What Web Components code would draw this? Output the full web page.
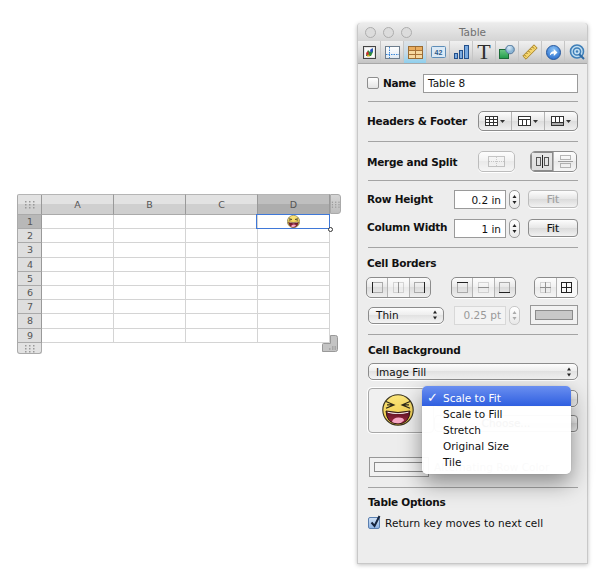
<!DOCTYPE html>
<html>
<head>
<meta charset="utf-8">
<title>Table</title>
<style>
  html, body { margin: 0; padding: 0; background: #fff; }
  body {
    display: flex;
    align-items: flex-start;
    width: 611px;
    height: 573px;
    overflow: hidden;
    font-family: "DejaVu Sans", sans-serif;
    font-size: 10.5px;
    color: #111;
  }
</style>
</head>
<body>
  <x-sheet></x-sheet>
  <x-inspector title="Table">
    <x-toolbar slot="toolbar"></x-toolbar>

    <x-row top="10" h="18">
      <x-check></x-check>
      <x-label style="margin-left:4px">Name</x-label>
      <x-field value="Table 8" align="left" style="margin-left:auto;width:155px"></x-field>
    </x-row>
    <x-rule top="9"></x-rule>

    <x-row top="9" h="20">
      <x-label>Headers &amp; Footer</x-label>
      <x-seg style="margin-left:auto;width:100px">
        <x-icon name="hdr1"></x-icon><x-icon name="hdr2"></x-icon><x-icon name="hdr3"></x-icon>
      </x-seg>
    </x-row>
    <x-rule top="10"></x-rule>

    <x-row top="9" h="21">
      <x-label>Merge and Split</x-label>
      <x-seg off style="margin-left:auto;width:37px"><x-icon name="merge" off></x-icon></x-seg>
      <x-seg style="margin-left:15px;margin-right:1px;width:47px">
        <x-icon name="splitv" class="on" style="flex:24 1 0"></x-icon><x-icon name="splith" off style="flex:23 1 0"></x-icon>
      </x-seg>
    </x-row>
    <x-rule top="8"></x-rule>

    <x-row top="9" h="19">
      <x-label style="margin-bottom:2px">Row Height</x-label>
      <x-field value="0.2 in" style="margin-left:auto;width:52px"></x-field>
      <x-stepper style="margin-left:3px"></x-stepper>
      <x-button off style="margin-left:8px;width:50px;align-self:flex-start">Fit</x-button>
    </x-row>
    <x-row top="10" h="19">
      <x-label style="margin-bottom:3px">Column Width</x-label>
      <x-field value="1 in" style="margin-left:auto;width:52px"></x-field>
      <x-stepper style="margin-left:3px"></x-stepper>
      <x-button style="margin-left:8px;width:50px;align-self:flex-start">Fit</x-button>
    </x-row>
    <x-rule top="9"></x-rule>

    <x-row top="8" h="14"><x-label>Cell Borders</x-label></x-row>
    <x-row top="7" h="21">
      <x-seg style="margin-left:-1px;width:65px">
        <x-icon name="bleft"></x-icon><x-icon name="bmidv" off></x-icon><x-icon name="bright"></x-icon>
      </x-seg>
      <x-seg style="margin-left:20px;width:65px">
        <x-icon name="btop"></x-icon><x-icon name="bmidh" off></x-icon><x-icon name="bbot"></x-icon>
      </x-seg>
      <x-seg style="margin-left:auto;width:44px">
        <x-icon name="binner" off></x-icon><x-icon name="bouter" class="white"></x-icon>
      </x-seg>
    </x-row>
    <x-row top="7" h="20">
      <x-select style="margin-left:1px;width:76px;height:17px">Thin</x-select>
      <x-field off value="0.25 pt" style="margin-left:10px;width:52px"></x-field>
      <x-stepper off style="margin-left:3px"></x-stepper>
      <x-well style="margin-left:auto;width:48px"></x-well>
    </x-row>
    <x-rule top="9"></x-rule>

    <x-row top="8" h="14"><x-label style="margin-left:1px">Cell Background</x-label></x-row>
    <x-row top="6" h="17">
      <x-select style="margin-left:1px;flex:1;height:17px">Image Fill</x-select>
    </x-row>
    <x-row top="8" h="45">
      <x-dropwell style="margin-left:1px"><x-icon name="face" style="width:32px;height:32px"></x-icon></x-dropwell>
      <x-stack style="margin-left:auto;width:144px">
        <x-select style="height:17px">Scale to Fit</x-select>
        <x-button style="height:17px;margin-top:8px">Choose...</x-button>
      </x-stack>
    </x-row>
    <x-row top="23" h="21">
      <x-well style="margin-left:2px;width:60px;--fill:#f4f4f4"></x-well>
      <x-label plain style="margin-left:5px;color:#777;white-space:nowrap">Alternating Row Color</x-label>
    </x-row>
    <x-rule top="10"></x-rule>

    <x-row top="7" h="14"><x-label style="margin-left:1px">Table Options</x-label></x-row>
    <x-row top="7" h="14">
      <x-check on style="margin-left:1px"></x-check>
      <x-label plain style="margin-left:5px">Return key moves to next cell</x-label>
    </x-row>

    <x-menu slot="overlay">
      <x-menu-item on>Scale to Fit</x-menu-item>
      <x-menu-item>Scale to Fill</x-menu-item>
      <x-menu-item>Stretch</x-menu-item>
      <x-menu-item>Original Size</x-menu-item>
      <x-menu-item>Tile</x-menu-item>
    </x-menu>
  </x-inspector>

<script>
// Icon set, all drawn by hand. Sizes sit on the svg itself.
const FACE = `<svg viewBox="0 0 32 32">
  <defs><linearGradient id="fy" x1="0" y1="0" x2="0" y2="1"><stop offset="0" stop-color="#fbe67c"/><stop offset="1" stop-color="#eec743"/></linearGradient>
  <linearGradient id="mo" x1="0" y1="0" x2="0" y2="1"><stop offset="0" stop-color="#5a1222"/><stop offset="1" stop-color="#a82a44"/></linearGradient></defs>
  <circle cx="16" cy="16" r="15.2" fill="url(#fy)" stroke="#3a3420" stroke-width="1.1"/>
  <path d="M4 7.500l8 3.400-8 3.400M28 7.500l-8 3.400 8 3.400M5 10.900h7M27 10.900h-7" fill="none" stroke="#2c2818" stroke-width="1.200"/>
  <path d="M4 17Q16 20 28 17Q27.500 29.500 16 30Q4.500 29.500 4 17z" fill="url(#mo)" stroke="#2c1a14" stroke-width="1"/>
  <path d="M5.500 17.800Q16 20.600 26.500 17.800l-.2 1Q16 21.200 5.700 18.800z" fill="#fff"/>
  <path d="M10 28q1-4.500 6.500-4.500t5.500 3q-2.500 2.800-6 2.800-3.500 0-6-1.300z" fill="#f7a8c4"/>
</svg>`;

const hdrIcon = (kind) => `<svg width="20" height="10" viewBox="0 0 20 10" fill="none">
  <rect x=".5" y=".5" width="12" height="9" fill="#fff" stroke="#333"/>
  ${kind === 3 ? '<rect x="1" y="6" width="11" height="3" fill="#aaa"/>' : ''}
  ${kind === 1 ? '<path d="M1 3.500h11M1 6.500h11M4.500 1v8M8.500 1v8" stroke="#333"/>' : ''}
  ${kind === 2 ? '<path d="M1 3.500h11M4.500 4v5M8.500 4v5" stroke="#333"/>' : ''}
  ${kind === 3 ? '<path d="M1 6.500h11M4.500 1v5M8.500 1v5" stroke="#333"/>' : ''}
  <path d="M15 4h5l-2.500 3z" fill="#333"/>
</svg>`;

const box = (inner, c = '#aaa') => `<svg width="11" height="11" viewBox="0 0 11 11" fill="none">
  <rect x=".5" y=".5" width="10" height="10" stroke="${c}"/>${inner}</svg>`;
const dark = (d) => `<path d="${d}" stroke="#222"/>`;

const ICONS = {
  face: FACE,
  hdr1: hdrIcon(1),
  hdr2: hdrIcon(2),
  hdr3: hdrIcon(3),
  merge: `<svg width="17" height="11" viewBox="0 0 17 11" fill="none"><rect x=".5" y=".5" width="16" height="10" stroke="#888" fill="#f4f4f4"/><path d="M8.500 1v9M1 5.500h15" stroke="#999" stroke-dasharray="1 1"/></svg>`,
  splitv: `<svg width="13" height="13" viewBox="0 0 13 13" fill="none"><rect x=".5" y="2.500" width="4" height="8" stroke="#555"/><rect x="8.500" y="2.500" width="4" height="8" stroke="#555"/><path d="M6.500 0v13" stroke="#222"/></svg>`,
  splith: `<svg width="15" height="13" viewBox="0 0 15 13" fill="none"><rect x="2.500" y=".5" width="10" height="4" stroke="#666"/><rect x="2.500" y="8.500" width="10" height="4" stroke="#666"/><path d="M0 6.500h15" stroke="#444"/></svg>`,
  bleft: box(dark('M.5 0v11')),
  bmidv: box(dark('M5.500 0v11')),
  bright: box(dark('M10.500 0v11')),
  btop: box(dark('M0 .5h11')),
  bmidh: box(dark('M0 5.500h11')),
  bbot: box(dark('M0 10.500h11')),
  binner: box(dark('M5.500 0v11M0 5.500h11')),
  bouter: box('<path d="M5.500 0v11M0 5.500h11" stroke="#222"/>', '#222')
};

// Toolbar tab glyphs
const TABS = [
  `<svg width="13" height="13" viewBox="0 0 13 13"><rect x=".5" y=".5" width="12" height="12" fill="#e4e4e4" stroke="#444"/><rect x="2" y="2" width="9" height="9" fill="#fafafa"/><path d="M3 9l2-5 2 2 3-4v4l-2 4H3z" fill="#2a8a3a"/><path d="M3 7l2-2 1 3-2 2z" fill="#d03030"/><path d="M7 4l2.500-2 .5 3-2 2z" fill="#2a50c8"/><path d="M4 9.500l2-1 1 2H4z" fill="#e0b020"/></svg>`,
  `<svg width="15" height="13" viewBox="0 0 15 13" fill="none"><defs><linearGradient id="pg" x1="0" y1="0" x2="0" y2="1"><stop offset="0" stop-color="#fff"/><stop offset="1" stop-color="#dfe9f2"/></linearGradient></defs><rect x=".5" y=".5" width="14" height="12" fill="url(#pg)" stroke="#6d7d8d"/><path d="M1 8.500h13M4.500 1v11" stroke="#3a86d8" stroke-dasharray="1.500 1"/></svg>`,
  `<svg width="15" height="13" viewBox="0 0 15 13" fill="none"><rect x=".5" y=".5" width="14" height="12" fill="#f6d9a0" stroke="#9a6c34"/><rect x="1" y="1" width="13" height="3" fill="#e9ad5f"/><path d="M1 4.500h13M1 8.500h13M7.500 1v11" stroke="#a8743a"/></svg>`,
  `<svg width="15" height="12" viewBox="0 0 15 12"><rect x=".5" y=".5" width="14" height="11" rx="1" fill="#dbe9f5" stroke="#5d8db8"/><text x="7.500" y="8.700" text-anchor="middle" font-family="Liberation Sans, sans-serif" font-weight="700" font-size="7" fill="#2d5a88">42</text></svg>`,
  `<svg width="15" height="14" viewBox="0 0 15 14"><g fill="#7aaae0" stroke="#23508c"><rect x=".5" y="8.500" width="3" height="5"/><rect x="5.500" y="5.500" width="3" height="8"/><rect x="10.500" y=".5" width="4" height="13"/></g></svg>`,
  `<span style="font:400 22px/20px 'Liberation Serif',serif;color:#2e2e2e">T</span>`,
  `<svg width="16" height="14" viewBox="0 0 16 14"><defs><linearGradient id="sq" x1="0" y1="0" x2="0" y2="1"><stop offset="0" stop-color="#6ec987"/><stop offset="1" stop-color="#1f9a4a"/></linearGradient><radialGradient id="ci" cx=".4" cy=".3"><stop offset="0" stop-color="#dcedf8"/><stop offset="1" stop-color="#8ab4d4"/></radialGradient></defs><rect x=".5" y="4.500" width="9" height="9" fill="url(#sq)" stroke="#1c6b38"/><circle cx="11" cy="4.500" r="4.300" fill="url(#ci)" stroke="#54789c"/></svg>`,
  `<svg width="16" height="16" viewBox="0 0 16 16"><path d="M12 .8L15.200 4 4 15.200.8 12z" fill="#f4d46c" stroke="#a8842c"/><path d="M10.500 3l1.500 1.500M8.500 5l1 1M6.500 7l1.500 1.500M4.500 9l1 1M2.500 11L4 12.500" stroke="#8e6e20" fill="none"/></svg>`,
  `<svg width="15" height="15" viewBox="0 0 15 15"><defs><radialGradient id="bl" cx=".5" cy=".3" r=".8"><stop offset="0" stop-color="#8cc4f6"/><stop offset="1" stop-color="#1c62c8"/></radialGradient></defs><circle cx="7.500" cy="7.500" r="7" fill="url(#bl)" stroke="#2a5a9c"/><path d="M3.800 10.500q.3-4 4-4.200V4l3.700 3.500L7.800 11V8.500q-2.300 0-4 2z" fill="#fff"/></svg>`,
  `<svg width="16" height="16" viewBox="0 0 16 16" fill="none"><circle cx="8" cy="7.500" r="6.500" fill="#c4e0f2" stroke="#3f7fb8" stroke-width="1.600"/><circle cx="8" cy="7.500" r="3.600" stroke="#3f7fb8" stroke-width="1.500"/><circle cx="8" cy="7.500" r="1.200" fill="#3f7fb8"/><path d="M10 10l5 5" stroke="#2d6aa4" stroke-width="2"/></svg>`
];

const DOTS = `<svg width="11" height="11" viewBox="0 0 11 11" fill="#999">
  <rect x="1" y="2" width="1.500" height="1.500"/><rect x="5" y="2" width="1.500" height="1.500"/><rect x="9" y="2" width="1.500" height="1.500"/>
  <rect x="1" y="5" width="1.500" height="1.500"/><rect x="5" y="5" width="1.500" height="1.500"/><rect x="9" y="5" width="1.500" height="1.500"/>
  <rect x="1" y="8" width="1.500" height="1.500"/><rect x="5" y="8" width="1.500" height="1.500"/><rect x="9" y="8" width="1.500" height="1.500"/>
</svg>`;

// Small base class so every element just hands over its css and html
class Base extends HTMLElement {
  connectedCallback() {
    if (this.shadowRoot) return;
    this.attachShadow({ mode: 'open' });
    this.shadowRoot.innerHTML = `<style>${this.css()}</style>${this.html()}`;
  }
  css() { return ':host { display: block; }'; }
  html() { return '<slot></slot>'; }
}

// ---- Table on the canvas ----
class XSheet extends Base {
  css() {
    return `
      :host { display: block; flex: none; position: relative; width: 324px; margin: 194px 0 0 17px; font: 9.5px "DejaVu Sans", sans-serif; color: #555; }
      .top { display: grid; grid-template-columns: 25px repeat(4, 72px) 11px; height: 21px; }
      .h { display: flex; align-items: center; justify-content: center; box-sizing: border-box;
           background: linear-gradient(#e2e2e2 0 50%, #cfcfcf 50% 100%); border-top: 1px solid #b5b5b5; border-bottom: 1px solid #aaa; border-right: 1px solid #999; }
      .h.corner { border-left: 1px solid #aaa; border-radius: 2px 0 0 0; }
      .h.sel { background: linear-gradient(#bfbfbf 0 50%, #adadad 50% 100%); }
      .h.end { border-radius: 0 3px 3px 0; border: 1px solid #aaa; background: linear-gradient(#d6d6d6, #bdbdbd); height: 20px; }
      .body { display: grid; grid-template-columns: 25px repeat(4, 72px); grid-auto-rows: 14.2px; }
      .n { display: flex; align-items: center; justify-content: center; box-sizing: border-box; padding-left: 1px;
           background: #dedede; border-left: 1px solid #aaa; border-right: 1px solid #999; border-bottom: 1px solid #aaa; }
      .n.sel { background: #b8b8b8; }
      .c { box-sizing: border-box; background: #fff; border-right: 1px solid #d4d4d4; border-bottom: 1px solid #d4d4d4; }
      .foot { box-sizing: border-box; width: 25px; height: 11px; background: #e2e2e2; border: 1px solid #aaa; border-top: 0; border-radius: 0 0 3px 3px; display: flex; justify-content: center; }
      .cursor { position: absolute; left: 239px; top: 20px; width: 74px; height: 15px; box-sizing: border-box; border: 1.500px solid #3f78d8; display: flex; align-items: center; justify-content: center; }
      .cursor svg { width: 13px; height: 13px; display: block; }
      .dot { position: absolute; left: 310.500px; top: 32.500px; width: 3px; height: 3px; border: 1px solid #333; border-radius: 50%; background: #fff; }
      .grip { position: absolute; left: 305px; top: 141px; width: 16px; height: 17px; }
    `;
  }
  html() {
    const cols = ['A', 'B', 'C', 'D'];
    const top = cols.map((c) => `<div class="h${c === 'D' ? ' sel' : ''}">${c}</div>`).join('');
    let rows = '';
    for (let i = 1; i <= 9; i++) {
      rows += `<div class="n${i === 1 ? ' sel' : ''}">${i}</div>` + '<div class="c"></div>'.repeat(4);
    }
    return `
      <div class="top"><div class="h corner">${DOTS}</div>${top}<div class="h end">${DOTS}</div></div>
      <div class="body">${rows}</div>
      <div class="foot">${DOTS}</div>
      <div class="cursor">${FACE}</div>
      <div class="dot"></div>
      <svg class="grip" viewBox="0 0 16 17"><path d="M8.500.5h5q2 0 2 2v12q0 2-2 2h-13V9.500q0-1 1-1h7z" fill="#c4c4c4" stroke="#999"/><path d="M10 12h1.500M12.500 12H14M7 14h1.500M10 14h1.500M12.500 14H14" stroke="#8a8a8a"/></svg>
    `;
  }
}

// ---- Inspector window ----
class XInspector extends Base {
  css() {
    return `
      :host { display: block; flex: none; position: relative; width: 231px; height: 541px; margin: 23px 0 0 16px; box-sizing: border-box;
              background: #ededed; border: 1px solid #c8c8c8; border-top: 0; border-radius: 4px 4px 0 0; box-shadow: 0 1px 4px rgba(0,0,0,.25); }
      .title { display: flex; align-items: center; height: 18px; padding-left: 7px; gap: 7px; position: relative;
               background: linear-gradient(#ececec, #d4d4d4); border-radius: 4px 4px 0 0; }
      .title i { display: block; width: 9px; height: 9px; border-radius: 50%; background: #dcdcdc; border: 1px solid #adadad; box-sizing: content-box; }
      .title span { position: absolute; left: 0; right: 0; text-align: center; font: 10.5px "DejaVu Sans", sans-serif; color: #707070; }
      .content { padding: 0 9px; }
    `;
  }
  html() {
    return `
      <div class="title"><i></i><i></i><i></i><span>${this.getAttribute('title')}</span></div>
      <slot name="toolbar"></slot>
      <div class="content"><slot></slot></div>
      <slot name="overlay"></slot>
    `;
  }
}

class XToolbar extends Base {
  css() {
    return `
      :host { display: flex; height: 23px; box-sizing: border-box; background: linear-gradient(#f0f0f0, #d9d9d9 60%, #c4c4c4); border-bottom: 1px solid #a8a8a8; }
      div { flex: none; width: 23px; box-sizing: border-box; border-right: 1px solid #c6c6c6; display: flex; align-items: center; justify-content: center; }
      div:last-child { border-right: 0; }
      div.on { background: linear-gradient(#dde3e8, #c6d9e6 55%, #8fd0ee); }
      svg { display: block; flex: none; }
    `;
  }
  html() {
    return TABS.map((t, i) => `<div class="${i === 2 ? 'on' : ''}">${t}</div>`).join('');
  }
}

class XRow extends Base {
  css() {
    const top = this.getAttribute('top') || 0;
    const h = this.getAttribute('h') || 18;
    return `:host { display: flex; align-items: center; margin-top: ${top}px; height: ${h}px; }`;
  }
}

class XRule extends Base {
  css() {
    return `:host { display: block; height: 1px; background: #a4a4a4; margin: ${this.getAttribute('top') || 0}px 0 0 1px; }`;
  }
  html() { return ''; }
}

class XLabel extends Base {
  css() {
    const plain = this.hasAttribute('plain');
    return `:host { display: block; font: ${plain ? 400 : 700} 10.5px/14px "DejaVu Sans", sans-serif; color: #111; white-space: nowrap; letter-spacing: ${plain ? '.06px' : '-.25px'}; }`;
  }
}

class XCheck extends Base {
  css() {
    const on = this.hasAttribute('on');
    return `
      :host { display: block; flex: none; width: 12px; height: 12px; box-sizing: border-box; border: 1px solid ${on ? '#5a7fb0' : '#8e8e8e'}; border-radius: 2px; position: relative;
              background: ${on ? 'linear-gradient(#cfe0f4, #8fb4e4)' : 'linear-gradient(#fff, #e4e4e4)'}; }
      svg { position: absolute; left: 0; top: -3px; width: 13px; height: 14px; }
    `;
  }
  html() {
    return this.hasAttribute('on') ? `<svg viewBox="0 0 13 14"><path d="M2.500 7.500l3 3.500 5-10" fill="none" stroke="#15233c" stroke-width="2"/></svg>` : '';
  }
}

class XField extends Base {
  css() {
    const off = this.hasAttribute('off');
    const left = this.getAttribute('align') === 'left';
    return `
      :host { display: flex; flex: none; align-items: center; height: 19px; box-sizing: border-box; background: ${off ? '#f3f3f3' : '#fff'};
              border: 1px solid ${off ? '#d8d8d8' : '#9a9a9a'}; padding: 0 4px; justify-content: ${left ? 'flex-start' : 'flex-end'};
              font: 10.5px "DejaVu Sans", sans-serif; color: ${off ? '#999' : '#111'}; white-space: nowrap; }
    `;
  }
  html() { return `<span>${this.getAttribute('value')}</span>`; }
}

class XStepper extends Base {
  css() {
    const off = this.hasAttribute('off');
    const c = off ? '#aaa' : '#222';
    return `
      :host { display: block; flex: none; width: 11px; height: 19px; box-sizing: border-box; border: 1px solid ${off ? '#c8c8c8' : '#9a9a9a'}; border-radius: 5px;
              background: linear-gradient(#fff, #e8e8e8); }
      svg { display: block; width: 9px; height: 17px; fill: ${c}; }
    `;
  }
  html() {
    return `<svg viewBox="0 0 9 17"><path d="M4.500 4L6.500 7h-4zM4.500 13L2.500 10h4z"/></svg>`;
  }
}

class XButton extends Base {
  css() {
    const off = this.hasAttribute('off');
    return `
      :host { display: flex; flex: none; align-items: center; justify-content: center; height: 18px; box-sizing: border-box; border: 1px solid ${off ? '#bcbcbc' : '#8c8c8c'}; border-radius: 4px;
              background: linear-gradient(#fdfdfd, #e6e6e6 50%, #dadada 50%, #f2f2f2); font: 400 10.5px "DejaVu Sans", sans-serif; color: ${off ? '#a0a0a0' : '#111'};
              box-shadow: 0 1px 0 #fff; -webkit-text-stroke: .2px currentColor; }
    `;
  }
}

class XSeg extends Base {
  css() {
    return `
      :host { display: flex; flex: none; height: 100%; box-sizing: border-box; border: 1px solid ${this.hasAttribute('off') ? '#bcbcbc' : '#8c8c8c'}; border-radius: 5px; overflow: hidden;
              background: linear-gradient(#fcfcfc, #e7e7e7 50%, #dcdcdc 50%, #efefef); box-shadow: 0 1px 0 #fff; }
      ::slotted(*) { flex: 1 1 0; border-left: 1px solid #b4b4b4; }
      ::slotted(*:first-child) { border-left: 0; }
      ::slotted(.on) { background: linear-gradient(#e8e8e8, #dcdcdc); box-shadow: inset 0 0 0 1px #8a8a8a; }
      ::slotted(.white) { background: #f8f8f8; }
      ::slotted([off]) { background: rgba(255,255,255,.4); }
    `;
  }
}

class XIcon extends Base {
  css() {
    const off = this.hasAttribute('off');
    return `
      :host { display: flex; align-items: center; justify-content: center; box-sizing: border-box; min-width: 0; }
      svg { display: block; flex: none; opacity: ${off ? .45 : 1}; }
      :host([name="face"]) svg { width: 100%; height: 100%; }
    `;
  }
  html() { return ICONS[this.getAttribute('name')] || ''; }
}

class XSelect extends Base {
  css() {
    return `
      :host { display: flex; flex: none; align-items: center; box-sizing: border-box; border: 1px solid #8c8c8c; border-radius: 5px; padding: 0 5px 0 7px;
              background: linear-gradient(#fdfdfd, #ececec 50%, #e2e2e2 50%, #f4f4f4); box-shadow: 0 1px 0 #fff;
              font: 10.5px "DejaVu Sans", sans-serif; color: #111; white-space: nowrap; }
      span { flex: 1; }
      svg { display: block; width: 6px; height: 10px; fill: #222; }
    `;
  }
  html() {
    return `<span><slot></slot></span><svg viewBox="0 0 6 10"><path d="M3 .5l2 3H1zM3 9.500l-2-3h4z"/></svg>`;
  }
}

class XWell extends Base {
  css() {
    return `
      :host { display: block; flex: none; height: 20px; box-sizing: border-box; border: 1px solid #989898; background: #f2f2f2; padding: 4px; }
      div { height: 100%; box-sizing: border-box; background: var(--fill, #c8c8c8); border: 1px solid #8c8c8c; }
    `;
  }
  html() { return '<div></div>'; }
}

class XDropwell extends Base {
  css() {
    return `
      :host { display: flex; flex: none; align-items: center; justify-content: flex-start; width: 66px; height: 45px; box-sizing: border-box; padding: 0 0 2px 13px; border: 1px solid #a8a8a8; border-radius: 4px;
              background: #f0f0f0; box-shadow: 0 0 0 1px #fff; }
    `;
  }
}

class XStack extends Base {
  css() { return ':host { display: block; flex: none; padding-top: 0; }'; }
}

class XMenu extends Base {
  css() {
    return `
      :host { display: block; position: absolute; left: 64px; top: 363px; width: 149px; height: 88px; box-sizing: border-box; padding: 0 0 4px; border-radius: 5px;
              background: rgba(255,255,255,.96); box-shadow: 0 9px 22px rgba(0,0,0,.42), 0 0 1px rgba(0,0,0,.3); overflow: hidden; }
    `;
  }
}

class XMenuItem extends Base {
  css() {
    return `
      :host { display: flex; align-items: center; height: 16px; padding-left: 21px; position: relative; font: 10.5px "DejaVu Sans", sans-serif; color: #111; white-space: nowrap; }
      :host([on]) { height: 20px; padding-top: 4px; box-sizing: border-box; color: #fff; background: linear-gradient(#6a8ff0, #2f5fe0); }
      b { position: absolute; left: 5px; top: 4px; font: 700 13px/16px "DejaVu Sans", sans-serif; }
    `;
  }
  html() {
    return `${this.hasAttribute('on') ? '<b>\u2713</b>' : ''}<slot></slot>`;
  }
}

customElements.define('x-sheet', XSheet);
customElements.define('x-inspector', XInspector);
customElements.define('x-toolbar', XToolbar);
customElements.define('x-row', XRow);
customElements.define('x-rule', XRule);
customElements.define('x-label', XLabel);
customElements.define('x-check', XCheck);
customElements.define('x-field', XField);
customElements.define('x-stepper', XStepper);
customElements.define('x-button', XButton);
customElements.define('x-seg', XSeg);
customElements.define('x-icon', XIcon);
customElements.define('x-select', XSelect);
customElements.define('x-well', XWell);
customElements.define('x-dropwell', XDropwell);
customElements.define('x-stack', XStack);
customElements.define('x-menu', XMenu);
customElements.define('x-menu-item', XMenuItem);
</script>
</body>
</html>
